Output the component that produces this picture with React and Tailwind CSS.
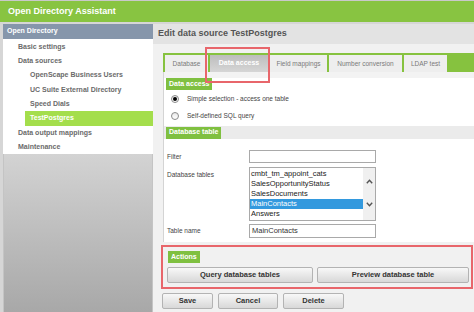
import React from "react";

const sidebarItems = [
  { label: "Basic settings", level: 0 },
  { label: "Data sources", level: 0 },
  { label: "OpenScape Business Users", level: 1 },
  { label: "UC Suite External Directory", level: 1 },
  { label: "Speed Dials", level: 1 },
  { label: "TestPostgres", level: 1, active: true },
  { label: "Data output mappings", level: 0 },
  { label: "Maintenance", level: 0 },
];

const tabs = [
  { label: "Database", w: "w-[43px]" },
  { label: "Data access", w: "w-[58px]", active: true },
  { label: "Field mappings", w: "w-[57px]" },
  { label: "Number conversion", w: "w-[73px]" },
  { label: "LDAP test", w: "w-[43px]" },
];

const tables = ["cmbt_tm_appoint_cats", "SalesOpportunityStatus", "SalesDocuments", "MainContacts", "Answers"];

const Sidebar = () => (
  <div className="w-[150px] ml-[3px] flex flex-col">
    <div className="h-[15px] bg-[#8696ab] pl-[4px] flex items-center text-[7px] font-bold text-white">Open Directory</div>
    <div className="bg-white pt-[1px]">
      {sidebarItems.map((item) => (
        <div
          key={item.label}
          className={`h-[14.3px] flex items-center text-[7px] font-bold ${item.level ? "ml-[22px] pl-[5px]" : "pl-[15px]"} ${
            item.active ? "bg-[#a4de4c] text-white" : "text-[#6b6b6b]"
          }`}
        >
          {item.label}
        </div>
      ))}
    </div>
    <div className="flex-1 bg-gradient-to-b from-[#d3d3d3] to-[#a8a8a8] border-x border-[#c4c4c4]" />
  </div>
);

// little green caption of a form section
const SectionLabel = ({ children, className = "" }) => (
  <div className={`w-fit h-[12px] px-[3px] flex items-center bg-[#7fc040] text-white text-[7px] font-bold ${className}`}>
    {children}
  </div>
);

const Radio = ({ checked, label }) => (
  <div className="h-[14px] flex items-center pl-[7px] gap-[8px]">
    <div className="w-[8px] h-[8px] rounded-full border border-[#8a8a8a] bg-gradient-to-b from-[#e8e8e8] to-white flex items-center justify-center">
      {checked && <div className="w-[4px] h-[4px] rounded-full bg-black" />}
    </div>
    <span className="text-[6.5px] text-[#444]">{label}</span>
  </div>
);

const Button = ({ children, w }) => (
  <button className={`${w} h-[16px] rounded-[2px] border border-[#b3b3b3] bg-gradient-to-b from-[#f8f8f8] to-[#d8d8d8] text-[7.5px] font-bold text-[#333]`}>
    {children}
  </button>
);

const Chevron = ({ up }) => (
  <svg width="7" height="5" viewBox="0 0 7 5">
    <path d={up ? "M0.8 4.2 L3.5 1.2 L6.2 4.2" : "M0.8 0.8 L3.5 3.8 L6.2 0.8"} fill="none" stroke="#555" strokeWidth="1.4" />
  </svg>
);

const Main = () => (
  <div className="flex-1 flex flex-col bg-[#f1f1f1]">
    <div className="h-[20px] bg-[#e3e3e3] pl-[5px] flex items-center text-[9px] font-bold text-[#555]">Edit data source TestPostgres</div>
    <div className="relative flex-1 pl-[10px] pt-[9px] flex flex-col">
      {/* tab strip */}
      <div className="flex h-[19px] bg-[#86c23f] pt-[2px] pl-[2px] gap-[2px]">
        {tabs.map((t) => (
          <div
            key={t.label}
            className={`${t.w} h-[17px] flex items-center justify-center ${
              t.active
                ? "bg-gradient-to-b from-[#bdbdbd] to-[#d6d6d6] text-white text-[7px] font-bold"
                : "bg-[#eeeeee] text-[#7a7a7a] text-[6.5px]"
            }`}
          >
            {t.label}
          </div>
        ))}
      </div>

      <div className="bg-white border-l border-[#d4d4d4] pb-[4px]">
        <div className="h-[6px] bg-[#f3f3f3]" />
        <SectionLabel className="ml-[2px] h-[11px]">Data access</SectionLabel>
        <div className="mt-[2px]">
          <Radio checked label="Simple selection - access one table" />
        </div>
        <div className="mt-[3px]">
          <Radio label="Self-defined SQL query" />
        </div>

        <div className="mt-[3px] h-[13px] bg-[#ebebeb] flex items-center">
          <SectionLabel className="ml-[2px]">Database table</SectionLabel>
        </div>

        <div className="mt-[11px] flex items-center pl-[3px]">
          <span className="w-[82px] text-[6.5px] text-[#444]">Filter</span>
          <div className="w-[127px] h-[13px] border border-[#a9a9a9] bg-white" />
        </div>

        <div className="mt-[4px] flex pl-[3px]">
          <span className="w-[82px] pt-[3px] text-[6.5px] text-[#444]">Database tables</span>
          <div className="w-[127px] h-[54px] border border-[#a9a9a9] bg-white flex">
            <div className="flex-1 pt-[1px]">
              {tables.map((t) => (
                <div
                  key={t}
                  className={`h-[10px] leading-[10px] pl-[1px] text-[7.5px] ${
                    t === "MainContacts" ? "bg-[#3399de] text-white" : "text-[#222]"
                  }`}
                >
                  {t}
                </div>
              ))}
            </div>
            <div className="w-[12px] bg-[#f0f0f0] flex flex-col items-center pt-[11px] gap-[18px]">
              <Chevron up />
              <Chevron />
            </div>
          </div>
        </div>

        <div className="mt-[3px] flex items-center pl-[3px]">
          <span className="w-[82px] text-[6.5px] text-[#444]">Table name</span>
          <div className="w-[127px] h-[14px] border border-[#a9a9a9] bg-white pl-[2px] flex items-center text-[7.5px] text-[#333]">
            MainContacts
          </div>
        </div>
      </div>

      {/* actions, boxed in red */}
      <div className="mt-[3px] -ml-[2px] mr-[1px] border-2 border-[#e8666b] bg-[#f1f1f1] pt-[4px] pb-[4px]">
        <SectionLabel className="ml-[5px] h-[10px]">Actions</SectionLabel>
        <div className="mt-[4px] pl-[4px] flex gap-[4px]">
          <Button w="w-[146px]">Query database tables</Button>
          <Button w="w-[152px]">Preview database table</Button>
        </div>
      </div>

      <div className="mt-[4px] -ml-[1px] flex gap-[5px]">
        <Button w="w-[51px]">Save</Button>
        <Button w="w-[60px]">Cancel</Button>
        <Button w="w-[61px]">Delete</Button>
      </div>

      {/* red marker round the Data access tab */}
      <div className="absolute left-[52px] top-[3px] w-[65px] h-[36px] border-2 border-[#e8666b]" />
    </div>
  </div>
);

export default function App() {
  return (
    <div className="w-[474px] h-[312px] overflow-hidden bg-[#d6d6d6] font-['Liberation_Sans',Arial,sans-serif] flex flex-col">
      <div className="h-[22px] shrink-0 border-t border-[#c9c9c9] bg-[#88c441] pl-[8px] flex items-center text-[9px] font-bold text-white">
        Open Directory Assistant
      </div>
      <div className="flex flex-1 pt-[2px]">
        <Sidebar />
        <Main />
      </div>
    </div>
  );
}
